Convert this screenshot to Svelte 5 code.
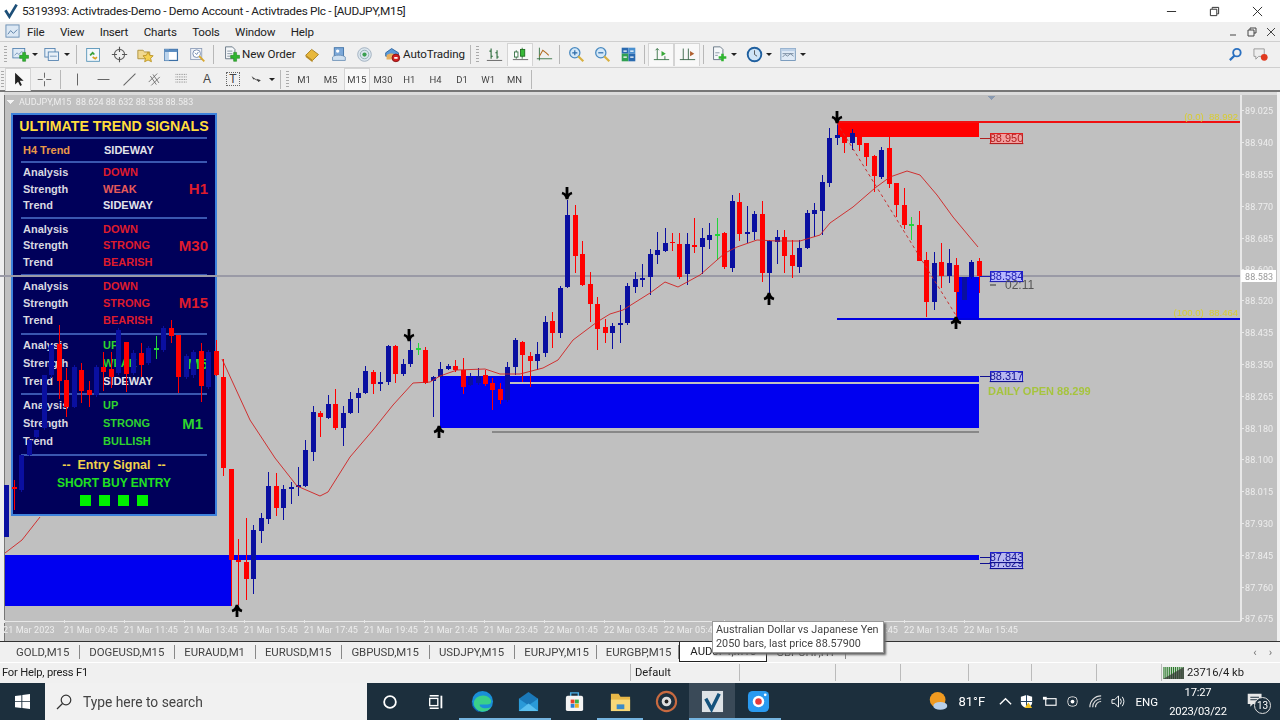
<script>
  const raw = [
    ['b',485,485,537,537],['r',480,487,489,510],['b',455,455,490,492],['b',440,440,455,456],['b',430,430,437,438],['b',375,375,428,430],['b',345,345,375,378],['r',325,344,381,399],['r',368,380,407,417],['b',365,367,407,408],['r',363,370,391,403],['r',381,390,395,407],['b',365,367,395,397],['r',352,367,372,391],['r',352,369,377,388],['b',328,330,373,375],['r',342,342,374,392],['b',350,353,373,375],['r',343,353,365,377],['b',346,348,363,365],['g',336,348,350,359],['b',326,328,350,352],['r',320,328,336,343],['r',335,335,377,393],['b',354,356,377,379],['b',350,352,375,378],['r',343,351,386,402],['b',350,352,387,389],['r',340,351,375,376],
    ['r',359,377,468,476],['r',469,469,560,606],['r',539,560,562,605],['r',518,562,579,600],['b',525,530,579,594],['b',513,518,531,543],['b',472,486,519,524],['r',473,486,508,516],['b',485,489,508,520],['b',482,487,489,504],['b',467,485,487,496],['b',440,450,486,487],['b',406,412,452,461],['r',411,413,417,437],['b',395,404,418,419],['r',389,404,428,430],['b',406,413,428,446],['b',392,399,413,414],['b',388,393,398,413],['b',366,371,393,394],['r',370,372,384,394],['b',372,382,384,391],['b',345,346,382,385],['r',345,346,374,383],
    ['b',359,364,374,376],['b',338,350,364,367],['g',343,348,350,355],['r',347,350,383,384],['b',376,377,381,417],['b',362,369,377,378],['b',364,366,369,370],['r',360,366,370,372],['r',358,370,387,394],['b',373,377,385,386],['b',368,376,383,385],['r',370,375,384,386],['r',378,383,390,410],['r',383,389,400,404],['b',362,367,400,402],['b',338,340,367,375],['r',341,342,355,382],['r',352,356,361,387],['b',342,354,361,370],['b',316,322,353,357],['r',312,321,333,348],['b',286,288,333,338],['b',200,215,287,288],['r',205,215,256,273],['r',241,254,285,286],['r',272,284,304,322],['r',297,304,329,350],['r',319,327,333,343],['b',323,326,333,349],['b',305,323,325,343],['b',283,286,323,325],['b',272,279,287,293],['b',264,278,280,287],['b',249,254,277,295],['b',232,250,255,264],['b',228,243,251,252],['r',233,242,243,251],['r',233,244,277,279],['b',233,244,274,285],['r',218,245,247,253],['b',228,238,247,274],['b',223,235,240,249],['g',218,234,236,260],['r',232,233,267,269],['b',195,201,268,272],['r',193,202,234,241],['b',206,232,234,243],['b',211,214,232,240],['r',201,214,273,282],['b',240,241,273,295],['b',230,237,242,264],['r',230,237,256,273],['r',240,255,266,278],['b',240,248,267,273],['b',210,213,248,249],['b',203,210,214,237],
    ['b',175,182,211,235],['b',128,138,183,187],['b',123,135,138,145],['r',123,130,143,153],['b',129,133,143,150],['r',130,133,145,151],['r',143,143,157,166],['r',155,156,176,192],['b',147,150,177,179],['r',137,148,184,188],['r',183,183,205,217],['r',188,205,225,229],['g',217,224,226,240],['r',211,225,261,261],['r',252,260,302,317],['b',252,263,302,310],['r',243,262,276,288],['b',249,263,276,283],['r',258,265,292,318],['b',277,277,300,300],['b',260,262,277,279],['r',258,261,276,293]
  ];
  const candles = raw.map((r, i) => ({ x: Math.round(402.7 + 7.48 * (i - 53)), color: r[0], hi: r[1], top: r[2], bot: r[3], lo: r[4] }));
  const colors = { r: '#f00', b: '#0a0fa0', g: '#22d43a' };
  const ma1 = '5,553 22,540 40,517';
  const ma2 = '222,359 250,420 275,458 297,486 320,496 328,492 350,457 373,430 393,405 413,383 430,382 440,376 457,370 485,369 500,374 520,374 543,368 558,360 573,340 597,322 610,314 623,310 650,293 665,282 678,287 700,275 725,253 737,247 757,240 777,241 800,241 820,235 830,223 853,207 875,188 890,177 907,171 920,175 937,195 953,217 978,247';
  const axisY = [['89.025',110],['88.940',142],['88.855',174],['88.770',206],['88.685',238],['88.600',269],['88.520',300],['88.435',332],['88.350',364],['88.265',396],['88.180',428],['88.100',459],['88.015',491],['87.930',523],['87.845',555],['87.760',587],['87.675',618]];
  const axisX = ['21 Mar 2023','21 Mar 09:45','21 Mar 11:45','21 Mar 13:45','21 Mar 15:45','21 Mar 17:45','21 Mar 19:45','21 Mar 21:45','21 Mar 23:45','22 Mar 01:45','22 Mar 03:45','22 Mar 05:45','22 Mar 07:45','22 Mar 09:45','22 Mar 11:45','22 Mar 13:45','22 Mar 15:45'];
  const downs = [[837,117],[567,193],[409,335]];
  const ups = [[769,299],[956,323],[439,432],[237,611]];
  const boxes = [['88.950',133,'#f4a0a0','#e02020','#b02020',980],['88.584',271,'#b8b8ff','#2020d0','#2020b0',980],['88.317',371,'#b8b8f0','#2020d0','#101090',980],['87.829',558,'#b8b8f0','#2020d0','#101090',980],['87.843',552,'#b8b8f0','#2020d0','#101090',980]];
  const groups = [
    { rows: [['Analysis','DOWN','red'],['Strength','WEAK','salmon'],['Trend','SIDEWAY','white']], tag: 'H1', tone: 'red', cls: 'g1' },
    { rows: [['Analysis','DOWN','red'],['Strength','STRONG','red'],['Trend','BEARISH','red']], tag: 'M30', tone: 'red', cls: 'g2' },
    { rows: [['Analysis','DOWN','red'],['Strength','STRONG','red'],['Trend','BEARISH','red']], tag: 'M15', tone: 'red', cls: 'g3' },
    { rows: [['Analysis','UP','green'],['Strength','WEAK','green'],['Trend','SIDEWAY','white']], tag: 'M5', tone: 'green', cls: 'g4' },
    { rows: [['Analysis','UP','green'],['Strength','STRONG','green'],['Trend','BULLISH','green']], tag: 'M1', tone: 'green', cls: 'g5' }
  ];
  const menu = ['File','View','Insert','Charts','Tools','Window','Help'];
  const periods = ['M1','M5','M15','M30','H1','H4','D1','W1','MN'];
  const tabs = ['GOLD,M15','DOGEUSD,M15','EURAUD,M1','EURUSD,M15','GBPUSD,M15','USDJPY,M15','EURJPY,M15','EURGBP,M15','AUDJPY,M15','GBPCHF,H1'];
  const plus = '<path d="M9 11h3.5V7.5h3.5V11h3.5v3.5h-3.5V18h-3.5v-3.5H9z" fill="#2fb52f" stroke="#157a15" stroke-width=".6"/>';
  const icons = {
    newchart: '<rect x="1" y="3" width="14" height="11" fill="#dfeaf6" stroke="#4f7fae"/><path d="M3 11l3-3 2 2 4-4" fill="none" stroke="#6b8fb5"/>' + plus,
    profiles: '<rect x="1" y="3" width="12" height="10" fill="#e8f0f8" stroke="#4f7fae"/><rect x="5" y="7" width="12" height="10" fill="#e8f0f8" stroke="#4f7fae"/><path d="M7 12h8" stroke="#6b8fb5"/>',
    market: '<rect x="2" y="3" width="15" height="15" fill="#f2f7fb" stroke="#4f8fb5"/><path d="M6 11l3-3 2 2" fill="none" stroke="#3aa03a" stroke-width="2"/><path d="M9 13l3 2 2-2" fill="none" stroke="#d8a020" stroke-width="2"/>',
    cross: '<circle cx="10" cy="10" r="6" fill="none" stroke="#666" stroke-width="1.3"/><path d="M10 1v6M10 13v6M1 10h6M13 10h6" stroke="#555" stroke-width="1.3"/>',
    star: '<path d="M1 5h6l2 2h6v8H1z" fill="#f0d890" stroke="#a88a30"/><path d="M13 7l2 4 4 .5-3 3 1 4-4-2-4 2 1-4-3-3 4-.5z" fill="#f4d050" stroke="#b89020"/>',
    nav: '<rect x="2" y="4" width="15" height="13" fill="#fff" stroke="#3a6ea5" stroke-width="1.4"/><rect x="2" y="4" width="5" height="13" fill="#bcd4ec"/><rect x="2" y="4" width="15" height="3" fill="#5a8cc0"/>',
    term: '<rect x="2" y="3" width="13" height="13" fill="#eef2f8" stroke="#8a9ab5"/><circle cx="9" cy="9" r="4.5" fill="#fff" stroke="#6a7fa5"/><path d="M12 12l6 6" stroke="#d8a830" stroke-width="2.2"/><path d="M7 8l2 2 2-3" fill="none" stroke="#5a78a5"/>',
    order: '<path d="M3 1h8l3 3v11H3z" fill="#f6f8fa" stroke="#5a6a7a"/><path d="M5 6h6M5 9h6M5 12h4" stroke="#7a8a9a"/>' + plus,
    oil: '<path d="M2 11l7-7 8 6-7 7z" fill="#e8b83c" stroke="#a07818"/><path d="M2 11l8 6v2l-8-6z" fill="#b88a20"/>',
    people: '<rect x="5" y="2" width="11" height="10" fill="#7ca8d8" stroke="#3a6ea5"/><circle cx="9" cy="6" r="2" fill="#fff"/><path d="M3 13c2-3 12-3 15 0v4H3z" fill="#cfe0f0" stroke="#6a8fb5"/>',
    signal: '<circle cx="10" cy="10" r="8" fill="#dce6ee" stroke="#9ab"/><circle cx="10" cy="10" r="5" fill="none" stroke="#8aa"/><circle cx="10" cy="10" r="2.5" fill="#3aa050"/>',
    auto: '<path d="M2 8l7-5 8 5v4H2z" fill="#5a9ad8" stroke="#2a6098"/><path d="M3 11c3-3 8-3 12 0v5H3z" fill="#e8b060"/><circle cx="14" cy="14" r="4.5" fill="#d02020" stroke="#801010"/><rect x="12" y="13" width="4" height="2" fill="#fff"/>',
    bar: '<path d="M6 3v12M4 6h2M6 12h2M13 5v10M11 8h2M13 13h2" stroke="#2a6a3a" stroke-width="1.3"/><path d="M1 17h18" stroke="#555"/>',
    candle: '<path d="M5 5v10M12 2v13" stroke="#2a6a3a"/><rect x="3" y="7" width="4" height="6" fill="#fff" stroke="#2a6a3a"/><rect x="10" y="4" width="5" height="8" fill="#38b838" stroke="#1a6a1a"/><path d="M1 16h18" stroke="#555"/>',
    line: '<path d="M4 2v15M1 15h18" stroke="#2a6a3a"/><path d="M4 12l4-7 4 3 3 3" fill="none" stroke="#b06a20" stroke-width="1.2"/>',
    zin: '<circle cx="8" cy="8" r="6" fill="#d4e8f8" stroke="#4a8ac0" stroke-width="1.5"/><path d="M5 8h6M8 5v6" stroke="#2a6aa8" stroke-width="1.4"/><path d="M12 12l6 6" stroke="#d8b040" stroke-width="2.6"/>',
    zout: '<circle cx="8" cy="8" r="6" fill="#d4e8f8" stroke="#4a8ac0" stroke-width="1.5"/><path d="M5 8h6" stroke="#2a6aa8" stroke-width="1.4"/><path d="M12 12l6 6" stroke="#d8b040" stroke-width="2.6"/>',
    grid: '<rect x="2" y="2" width="8" height="7" fill="#2a6ab0"/><rect x="10" y="2" width="8" height="7" fill="#4a90d0"/><rect x="2" y="9" width="8" height="9" fill="#30a050"/><rect x="10" y="9" width="8" height="9" fill="#2a6ab0"/><path d="M4 6h4M12 6h4M4 13h4M12 13h4" stroke="#fff" stroke-width="1.5"/>',
    scroll: '<path d="M5 3v13M3 5l2-2 2 2M1 16h18M14 12v4" stroke="#2a6a3a" fill="none"/><path d="M10 6l5 3-5 3z" fill="#38a838"/>',
    shift: '<path d="M5 3v13M11 3v13M1 16h18" stroke="#2a5a3a"/><path d="M13 6l5 3-5 3z" fill="#b06030"/>',
    addind: '<path d="M3 1h8l3 3v12H3z" fill="#f6f8fa" stroke="#5a6a7a"/><path d="M5 8h5M5 11h3" stroke="#7a8a9a"/><path d="M9 12h3V9h3v3h3v3h-3v3h-3v-3H9z" fill="#2fb52f"/>',
    clock: '<circle cx="10" cy="10" r="8" fill="#cfe4f6" stroke="#1f5f9f" stroke-width="2.2"/><path d="M10 5v5l3 2" fill="none" stroke="#444"/>',
    tpl: '<rect x="1" y="3" width="17" height="14" fill="#dfeaf6" stroke="#6a8fb5"/><rect x="1" y="3" width="17" height="3" fill="#bcd0e6"/><path d="M3 13l3-3 3 2 3-3 4 3M3 9h13" fill="none" stroke="#6a7f95"/>',
    arrow: '<path d="M6 2v14l3.5-3.5 2.5 5 2-1-2.5-5H16z" fill="#222"/>',
    tcross: '<path d="M10 2v6M10 12v6M2 10h6M12 10h6" stroke="#555"/>',
    vline: '<path d="M10 3v14" stroke="#666" stroke-width="1.2"/>',
    hline: '<path d="M3 10h14" stroke="#666" stroke-width="1.2"/>',
    trend: '<path d="M3 17L17 3" stroke="#666" stroke-width="1.2"/>',
    channel: '<path d="M2 13L12 3M5 17L15 7M4 6l7 10M7 4l7 10" stroke="#666"/>',
    fib: '<path d="M3 4h14M3 7h14M3 10h14M3 13h14" stroke="#777" stroke-dasharray="1 1"/>',
    tools: '<path d="M3 6l4 3-2 1zM9 9l5 2-3 2z" fill="#444"/><path d="M6 9l6 3" stroke="#444"/>'
  };
  const tb1 = [
    { i: 'newchart', caret: 1, w: 'w1' }, { i: 'profiles', caret: 1, w: 'w2' }, { sep: 1 },
    { i: 'market' }, { i: 'cross' }, { i: 'star' }, { i: 'nav' }, { i: 'term' }, { sep: 1 },
    { i: 'order', label: 'New Order', w: 'lbl1' }, { i: 'oil' }, { i: 'people' }, { i: 'signal' },
    { i: 'auto', label: 'AutoTrading', w: 'lbl2' }, { sep: 1 }, { grip: 1 },
    { i: 'bar' }, { i: 'candle', on: 1 }, { i: 'line', w: 'narrow' }, { sep: 1 },
    { i: 'zin' }, { i: 'zout' }, { i: 'grid' }, { sep: 1 },
    { i: 'scroll', on: 1 }, { i: 'shift', on: 1 }, { sep: 1 },
    { i: 'addind', caret: 1, w: 'w5' }, { i: 'clock', caret: 1, w: 'w6' }, { i: 'tpl', caret: 1, w: 'w3' }
  ];
  const tb2 = [
    { i: 'arrow', on: 1 }, { i: 'tcross' }, { sep: 1 }, { i: 'vline' }, { i: 'hline' }, { i: 'trend' }, { i: 'channel' }, { i: 'fib' }
  ];
</script>

{#snippet tbtn(b)}
  {#if b.sep}<span class="sep"></span>
  {:else if b.grip}<span class="grip"></span>
  {:else}
    <span class="btn {b.w ?? ''}" class:on={b.on}>
      <svg class="ic" viewBox="0 0 20 20">{@html icons[b.i]}</svg>
      {#if b.label}<span class="btxt">{b.label}</span>{/if}
      {#if b.caret}<span class="caret"></span>{/if}
    </span>
  {/if}
{/snippet}

<div class="app">
  <header class="title">
    <svg class="logo" viewBox="0 0 20 20"><path d="M3 9l5 8L17 2" fill="none" stroke="#1d4f78" stroke-width="3.4"/></svg>
    <span class="ttl">5319393: Activtrades-Demo - Demo Account - Activtrades Plc - [AUDJPY,M15]</span>
    <span class="winbtns">
      <svg viewBox="0 0 12 12"><path d="M1 6h10" stroke="#222"/></svg>
      <svg viewBox="0 0 12 12"><path d="M3.5 3V1.5h7v7H9M1.5 3.5h7v7h-7z" fill="none" stroke="#222"/></svg>
      <svg viewBox="0 0 12 12"><path d="M1 1l10 10M11 1L1 11" stroke="#222"/></svg>
    </span>
  </header>

  <nav class="menu">
    <svg class="mico" viewBox="0 0 16 16"><rect x="1" y="1" width="14" height="13" fill="#dce8f4" stroke="#6a8fb5"/><path d="M3 11l3-4 3 3 4-4" fill="none" stroke="#5a7fa5"/></svg>
    {#each menu as m}<span class="mi">{m}</span>{/each}
    <span class="mdi">
      <svg viewBox="0 0 10 10"><path d="M2 8h6" stroke="#444"/></svg>
      <svg viewBox="0 0 10 10"><path d="M3 3V1h6v5H7M1 3h6v6H1z" fill="none" stroke="#444"/></svg>
      <svg viewBox="0 0 10 10"><path d="M1 1l8 8M9 1L1 9" stroke="#444"/></svg>
    </span>
  </nav>

  <div class="bar b1">
    <span class="grip"></span>
    {#each tb1 as b}{@render tbtn(b)}{/each}
    <span class="helpers">
      <svg viewBox="0 0 16 16"><circle cx="9.5" cy="6" r="4" fill="none" stroke="#2a70c0" stroke-width="2"/><path d="M7 9l-5 5" stroke="#2a70c0" stroke-width="2.4"/></svg>
      <svg viewBox="0 0 16 16"><path d="M1 2h11v8H6l-3 3v-3H1z" fill="#eee" stroke="#999"/><circle cx="12" cy="11" r="3.6" fill="#e03a20"/></svg>
    </span>
  </div>

  <div class="bar b2">
    <span class="grip"></span>
    {#each tb2 as b}{@render tbtn(b)}{/each}
    <span class="btn"><span class="letter a">A</span></span>
    <span class="btn"><span class="letter t">T</span></span>
    <span class="btn w4"><svg class="ic" viewBox="0 0 20 20">{@html icons.tools}</svg><span class="caret"></span></span>
    <span class="sep"></span>
    <span class="grip"></span>
    {#each periods as p}<span class="per" class:on={p === 'M15'}>{p}</span>{/each}
    <span class="sep"></span>
  </div>

  <main class="chart">
    <div class="panel">
      <div class="ptitle">ULTIMATE TREND SIGNALS</div>
      <hr />
      <div class="h4"><span class="lab h4l">H4 Trend</span><span class="white">SIDEWAY</span></div>
      <hr />
      {#each groups as g}
        <div class="group {g.cls}">
          <div class="rows">
            {#each g.rows as r}
              <div class="row"><span class="lab">{r[0]}</span><span class={r[2]}>{r[1]}</span></div>
            {/each}
          </div>
          <span class="tag {g.tone}">{g.tag}</span>
        </div>
        <hr />
      {/each}
      <div class="entry">--&nbsp; Entry Signal &nbsp;--</div>
      <div class="short">SHORT BUY ENTRY</div>
      <div class="squares"><i></i><i></i><i></i><i></i></div>
    </div>

    <svg class="plot" viewBox="0 92 1280 549" shape-rendering="crispEdges">
      <rect x="4" y="92" width="1273" height="3" fill="#dcdcdc"/>
      <rect x="837" y="121" width="142" height="16" fill="#f00"/>
      <rect x="957" y="277" width="22" height="41" fill="#0000f0"/>
      <rect x="440" y="376" width="539" height="52" fill="#0000f0"/>
      <rect x="510" y="382" width="469" height="2" fill="#c0c0c0"/>
      <rect x="492" y="431" width="487" height="2" fill="#888"/>
      <rect x="5" y="555" width="227" height="51" fill="#0000f0"/>
      <rect x="232" y="555" width="747" height="5" fill="#0000f0"/>
      <rect x="0" y="275" width="1240" height="1.5" fill="#9a9aa6"/>
      <rect x="837" y="121" width="403" height="2" fill="#f01010"/>
      <rect x="837" y="318" width="403" height="2" fill="#0000e0"/>
      {#each candles as k}
        <rect x={k.x} y={k.hi} width="1" height={k.lo - k.hi} fill={colors[k.color]}/>
        <rect x={k.x - 2} y={k.top} width="5" height={Math.max(k.bot - k.top, 1)} fill={colors[k.color]}/>
      {/each}
      <g shape-rendering="auto" fill="none">
        <polyline points={ma1} stroke="#d02020" stroke-width="0.9"/>
        <polyline points={ma2} stroke="#d02020" stroke-width="0.9"/>
        <path d="M837 123L957 317" stroke="#c83030" stroke-dasharray="3 3"/>
        {#each downs as [x, y]}
          <path d="M{x} {y - 6}V{y + 6}M{x - 5} {y}Q{x - 1} {y + 1} {x} {y + 6}Q{x + 1} {y + 1} {x + 5} {y}" stroke="#000" stroke-width="2.8"/>
        {/each}
        {#each ups as [x, y]}
          <path d="M{x} {y + 6}V{y - 6}M{x - 5} {y}Q{x - 1} {y - 1} {x} {y - 6}Q{x + 1} {y - 1} {x + 5} {y}" stroke="#000" stroke-width="2.8"/>
        {/each}
      </g>
      {#each boxes as [v, y, fill, st, tc, from]}
        <path d="M{from} {y + 5.5}H990" stroke={tc}/>
        <rect x="990.5" y={y + 0.5} width="32" height="10" fill={fill} stroke={st}/>
        <text class="boxv" x="1006.5" y={y + 9} fill={tc}>{v}</text>
      {/each}
      <g shape-rendering="auto">
        <text class="fibo" x="1238" y="120">(0.0)&nbsp; 88.992</text>
        <text class="fibo" x="1238" y="316">(100.0)&nbsp; 88.464</text>
        <text class="daily" x="988" y="395">DAILY OPEN 88.299</text>
        <text class="clock" x="1005" y="289">02:11</text>
        <path d="M990 285h6" stroke="#333"/>
      </g>
      <rect x="1240" y="95" width="1.5" height="526" fill="#e8e8e8"/>
      <rect x="5" y="620.5" width="1236" height="1.5" fill="#e8e8e8"/>
      {#each axisY as [v, y]}
        <rect x="1241" y={y} width="3" height="1" fill="#e8e8e8"/>
        <text class="ax" x="1245" y={y + 3.5}>{v}</text>
      {/each}
      <rect x="1241" y="270" width="35" height="12" fill="#fff"/>
      <text class="ax bid" x="1245" y="280">88.583</text>
      {#each axisX as v, i}
        <rect x={4 + i * 60} y="620" width="1" height="3" fill="#e8e8e8"/>
        <text class="ax" x={i === 0 ? 3 : 4 + i * 60} y="633">{v}</text>
      {/each}
      <path d="M987 96h8l-4 4z" fill="#8a9ab0"/>
      <path d="M7 100h7l-3.5 4z" fill="#f4f4f4"/>
      <text class="info" x="19" y="105">AUDJPY,M15&nbsp; 88.624 88.632 88.538 88.583</text>
    </svg>

    <div class="tip">
      <div>Australian Dollar vs Japanese Yen</div>
      <div>2050 bars, last price 88.57900</div>
    </div>
  </main>

  <div class="tabs">
    {#each tabs as t}<span class="tab" class:active={t.startsWith('AUDJPY')}>{t}</span>{/each}
    <span class="tabnav"><i>‹</i><i>›</i></span>
  </div>

  <footer class="status">
    <span class="s0">For Help, press F1</span>
    <span class="scell s1">Default</span>
    <span class="scell s2"></span><span class="scell s3"></span><span class="scell s4"></span><span class="scell s5"></span><span class="scell s6"></span><span class="scell s8"></span>
    <span class="scell s7">
      <svg viewBox="0 0 22 12" preserveAspectRatio="none"><path d="M1 0v12M3 0v12M5 0v12M7 0v12M9 0v12M11 0v12M13 0v12M15 0v12M17 0v12M19 0v12M21 0v12" stroke="#2a7a2a" stroke-width="1.2"/><path d="M0 12L22 0V12z" fill="#333" opacity=".7"/></svg>
      23716/4 kb
    </span>
  </footer>

  <div class="task">
    <span class="start"><svg viewBox="0 0 16 16"><path d="M0 2.2L6.8 1.2V7.6H0zM7.8 1L16 0V7.6H7.8zM0 8.6H6.8V15L0 14zM7.8 8.6H16V16L7.8 15z" fill="#fff"/></svg></span>
    <span class="search">
      <svg viewBox="0 0 16 16"><circle cx="10" cy="6" r="4.8" fill="none" stroke="#333" stroke-width="1.2"/><path d="M6.5 9.5L1 15" stroke="#333" stroke-width="1.2"/></svg>
      Type here to search
    </span>
    <span class="tk small"><svg viewBox="0 0 20 20"><circle cx="10" cy="10" r="6.5" fill="none" stroke="#fff" stroke-width="2"/></svg></span>
    <span class="tk small"><svg viewBox="0 0 20 20"><path d="M3 3h10M3 17h10" stroke="#fff" stroke-width="1.6"/><rect x="3" y="6" width="9" height="8" fill="none" stroke="#fff" stroke-width="1.5"/><rect x="15" y="3" width="2" height="14" fill="#fff"/></svg></span>
    <span class="tk run"><svg viewBox="0 0 24 24"><circle cx="12" cy="12" r="11" fill="#1a8fd8"/><path d="M3 14C3 6 15 3 20 9c2 3 1 6-3 6H9c0 4 6 5 12 3-3 5-11 6-15 2-2-2-3-4-3-6z" fill="#3ad08a"/><path d="M8 23C3 21 0 16 1 12c1 5 4 9 9 11z" fill="#0f5ea8"/></svg></span>
    <span class="tk run"><svg viewBox="0 0 24 24"><rect x="2" y="9" width="20" height="13" fill="#2a9ad8"/><path d="M2 9l10-7 10 7-10 7z" fill="#1a78b8"/><path d="M2 22l10-8 10 8z" fill="#5ac0f0"/></svg></span>
    <span class="tk"><svg viewBox="0 0 24 24"><path d="M8 7V3h8v4" fill="none" stroke="#4ab0e8" stroke-width="1.5"/><rect x="3" y="6" width="18" height="16" rx="2" fill="#f4f4f4"/><rect x="8" y="10" width="4" height="4" fill="#e8402a"/><rect x="12.5" y="10" width="4" height="4" fill="#3ab04a"/><rect x="8" y="14.5" width="4" height="4" fill="#2a80d8"/><rect x="12.5" y="14.5" width="4" height="4" fill="#f0b020"/></svg></span>
    <span class="tk run"><svg viewBox="0 0 24 24"><path d="M2 4h8l2 3h10v15H2z" fill="#e8b848"/><rect x="2" y="10" width="20" height="12" fill="#f8d878"/><rect x="8" y="15" width="8" height="5" fill="#3a8ac8"/></svg></span>
    <span class="tk"><svg viewBox="0 0 24 24"><circle cx="12" cy="12" r="10" fill="none" stroke="#c86a40" stroke-width="2.2"/><circle cx="12" cy="12" r="5" fill="#ddd"/><circle cx="12" cy="12" r="2" fill="#222"/></svg></span>
    <span class="tk cur"><svg viewBox="0 0 24 24"><rect x="1" y="1" width="22" height="22" fill="#dde2e6"/><path d="M5 9l6 11L19 4" fill="none" stroke="#14527c" stroke-width="3.6"/></svg></span>
    <span class="tk run"><svg viewBox="0 0 24 24"><rect x="1" y="1" width="22" height="22" rx="5" fill="#2a9af0"/><circle cx="12" cy="12" r="6" fill="#fff"/><circle cx="12" cy="12" r="3.4" fill="#e83a3a"/><circle cx="19" cy="5" r="1.4" fill="#fff"/></svg></span>

    <span class="tray">
      <svg class="sun" viewBox="0 0 24 24"><circle cx="11" cy="10" r="9" fill="#f09a20"/><ellipse cx="14" cy="17" rx="8" ry="4.5" fill="#b8cfe8"/></svg>
      <span class="tmp">81°F</span>
      <svg class="tic chev" viewBox="0 0 16 16"><path d="M2 11l6-6 6 6" fill="none" stroke="#fff" stroke-width="1.4"/></svg>
      <svg class="tic" viewBox="0 0 16 16"><path d="M8 1l6 2v6c0 3-3 5-6 6-3-1-6-3-6-6V3z" fill="#fff"/><path d="M2 8h12M8 1v14" stroke="#1a3a5a"/><path d="M10 9l4 6H6z" fill="#f0c020"/></svg>
      <svg class="tic" viewBox="0 0 16 16"><rect x="4" y="5" width="11" height="7" fill="none" stroke="#fff" stroke-width="1.2"/><path d="M1 3h4v3H1z" fill="#fff"/></svg>
      <svg class="tic" viewBox="0 0 16 16"><rect x="3" y="3" width="10" height="10" rx="4" fill="none" stroke="#ddd"/><circle cx="8" cy="8" r="2" fill="#fff"/></svg>
      <svg class="tic" viewBox="0 0 16 16"><path d="M2 14A12 12 0 0 1 14 2M5 14A9 9 0 0 1 14 5M8 14A6 6 0 0 1 14 8" fill="none" stroke="#ddd" stroke-width="1.2"/></svg>
      <svg class="tic" viewBox="0 0 16 16"><path d="M1 6h3l4-4v12l-4-4H1z" fill="none" stroke="#fff"/><path d="M10 5q2 3 0 6M12 3q3.5 5 0 10" fill="none" stroke="#fff"/></svg>
      <span class="eng">ENG</span>
      <span class="time"><span>17:27</span><span>2023/03/22</span></span>
      <span class="note"><svg viewBox="0 0 22 22"><path d="M2 2h16v12H8l-3 3v-3H2z" fill="#e8e8e8"/><path d="M5 6h10M5 9h10" stroke="#1c2f3d" stroke-width="1.2"/></svg><b>13</b></span>
    </span>
  </div>
</div>

<style>
  :global(body) { margin: 0; overflow: hidden; background: #f0f0f0; }
  .app { width: 1280px; height: 720px; display: flex; flex-direction: column; overflow: hidden; font-family: Roboto, "Liberation Sans", sans-serif; font-size: 12px; color: #222; filter: blur(0.35px); }
  .title { height: 22px; background: #fff; display: flex; align-items: center; padding-left: 3px; flex: none; }
  .logo { width: 16px; height: 16px; margin-right: 3px; }
  .ttl { font-size: 11.8px; letter-spacing: -0.29px; color: #222; white-space: nowrap; }
  .winbtns { margin-left: auto; display: flex; gap: 32px; padding-right: 17px; }
  .winbtns svg { width: 11px; height: 11px; }
  .menu { height: 19px; background: #f0f0f0; display: flex; align-items: center; padding-left: 5px; flex: none; }
  .mico { width: 15px; height: 15px; margin-right: 7px; }
  .mi { margin-right: 15.5px; font-size: 11.6px; letter-spacing: -0.2px; }
  .mdi { margin-left: auto; display: flex; gap: 9px; padding-right: 4px; }
  .mdi svg { width: 10px; height: 10px; }
  .bar { background: #f0f0f0; display: flex; align-items: center; flex: none; box-shadow: inset 0 1px 0 #cfcfcf; }
  .b1 { height: 26px; padding-left: 2px; }
  .b2 { height: 25px; border-bottom: 2px solid #777; box-sizing: border-box; padding-top: 1px; }
  .b2 > .grip:first-child { margin: 0 1px; }
  .grip { width: 3px; height: 17px; margin: 0 2px; flex: none; background: repeating-linear-gradient(#aaa 0 1px, transparent 1px 3px); }
  .sep { width: 1px; height: 19px; background: #b8b8b8; margin: 0 3px; flex: none; }
  .btn { width: 26px; height: 23px; display: flex; align-items: center; justify-content: center; flex: none; box-sizing: border-box; }
  .btn.on { background: #f8f8f8; border: 1px solid #d4d4d4; border-bottom: 0; }
  .ic { width: 17px; height: 17px; flex: none; }
  .btxt { font-size: 11.6px; letter-spacing: -0.1px; margin-left: 2px; white-space: nowrap; }
  .w1 { width: 31px; } .w2 { width: 33px; } .w3 { width: 33px; } .w4 { width: 31px; } .w5 { width: 34px; } .w6 { width: 35px; }
  .narrow { width: 23px; }
  .lbl1 { width: 82px; justify-content: flex-start; padding-left: 6px; }
  .lbl2 { width: 90px; justify-content: flex-start; padding-left: 7px; }
  .caret { border: 3px solid transparent; border-top: 3px solid #222; margin: 3px 0 0 3px; flex: none; }
  .helpers { margin-left: auto; display: flex; gap: 10px; padding-right: 12px; }
  .helpers svg { width: 15px; height: 15px; }
  .letter { font-family: "Liberation Sans", sans-serif; font-size: 12px; color: #444; }
  .letter.t { border: 1px dotted #666; padding: 0 2px; line-height: 12px; }
  .per { width: 26.3px; height: 22px; display: flex; align-items: center; justify-content: center; font-size: 9.5px; color: #444; box-sizing: border-box; flex: none; }
  .per.on { background: #f8f8f8; border: 1px solid #d4d4d4; border-bottom: 0; }
  .chart { position: relative; height: 549px; flex: none; background: #c0c0c0; border-left: 4px solid #eee; border-right: 3px solid #f0f0f0; box-sizing: border-box; box-shadow: inset 1px 0 0 #777; }
  .plot { position: absolute; left: -4px; top: 0; width: 1280px; height: 549px; }
  .boxv { font: 11px "Liberation Sans", sans-serif; text-anchor: middle; text-decoration: underline; }
  .fibo { font: 9.5px "Liberation Sans", sans-serif; fill: #d8cc30; text-anchor: end; }
  .daily { font: bold 11px "Liberation Sans", sans-serif; fill: #a6c43e; }
  .clock { font: 12px "Liberation Sans", sans-serif; fill: #555; }
  .ax { font: 9px Roboto, sans-serif; fill: #eee; letter-spacing: .1px; }
  .bid { fill: #999; }
  .info { font: 9px Roboto, sans-serif; fill: #eee; }
  .panel { position: absolute; left: 7px; top: 21px; width: 206px; height: 403px; box-sizing: border-box; border: 2px solid #3e82dc; background: #00005a; font: bold 11px "Liberation Sans", sans-serif; color: #d8d8e0; }
  .panel hr { margin: 0 8px; border: 0; height: 2px; background: #3a56b0; }
  .ptitle { height: 22px; display: flex; align-items: center; justify-content: center; color: #ffdc3c; font-size: 14.2px; white-space: nowrap; }
  .h4 { height: 22px; display: grid; grid-template-columns: 81px 1fr; align-items: center; padding-left: 10px; }
  .h4l { color: #e89848; }
  .group { position: relative; display: flex; align-items: center; padding-left: 10px; box-sizing: border-box; }
  .rows { flex: 1; }
  .row { display: grid; grid-template-columns: 80px 1fr; align-items: center; }
  .g1 { height: 54px; padding-bottom: 3px; } .g2 { height: 55px; padding-bottom: 3px; } .g3 { height: 57px; padding-bottom: 4px; } .g4 { height: 58px; padding-bottom: 2px; } .g5 { height: 59px; padding-bottom: 3px; }
  .g1 .row, .g2 .row { height: 16.5px; }
  .g3 .row { height: 17px; }
  .g4 .row, .g5 .row { height: 18px; }
  .tag { font-size: 15px; margin-right: 7px; }
  .g5 .tag { margin-right: 12px; }
  .white { color: #e4e4ea; } .red { color: #de1c2c; } .salmon { color: #e65a58; } .green { color: #2ed42e; }
  .entry { text-align: center; color: #f2d24a; font-size: 12.5px; line-height: 18px; }
  .short { text-align: center; color: #20e020; font-size: 12px; line-height: 18px; }
  .squares { display: flex; justify-content: center; gap: 8px; margin-top: 3px; }
  .squares i { width: 11px; height: 11px; background: #00f000; }
  .tip { position: absolute; left: 708px; top: 529px; width: 172px; height: 32px; background: #fff; border: 1px solid #999; box-shadow: 2px 2px 2px #666; font-size: 10.8px; line-height: 13.5px; color: #444; padding: 1px 3px; box-sizing: border-box; white-space: nowrap; z-index: 2; }
  .tabs { height: 21px; flex: none; display: flex; align-items: center; background: #f0f0f0; border-top: 1px solid #333; box-sizing: border-box; padding-left: 7px; font-size: 11.4px; letter-spacing: -0.05px; color: #444; }
  .tab { padding: 0 10px 0 9px; border-right: 1px solid #888; height: 14px; line-height: 14px; white-space: nowrap; }
  .tab:nth-child(7), .tab:nth-child(8) { padding-right: 7px; }
  .tab.active { height: 20px; line-height: 18px; margin-top: -1px; background: #fff; border: 1px solid #222; border-top: 0; box-sizing: border-box; color: #222; padding: 0 10px; }
  .tabnav { margin-left: auto; display: flex; gap: 12px; padding-right: 8px; color: #777; }
  .tabnav i { font-style: normal; }
  .status { height: 21px; flex: none; display: flex; align-items: center; background: #f0f0f0; box-shadow: inset 0 1px 0 #fff; font-size: 11.2px; padding-left: 2px; }
  .s0 { width: 628px; flex: none; letter-spacing: -0.2px; }
  .scell { height: 17px; line-height: 17px; border-left: 1px solid #bbb; padding-left: 4px; box-sizing: border-box; flex: none; display: flex; align-items: center; gap: 3px; }
  .s1 { width: 109px; } .s2 { width: 96px; } .s3 { width: 65px; } .s4 { width: 68px; } .s5 { width: 63px; } .s6 { width: 65px; } .s8 { width: 65px; }
  .s7 { padding-left: 1px; }
  .s7 svg { width: 21px; height: 12px; }
  .task { height: 37px; flex: none; background: #1c2f3d; display: flex; align-items: stretch; color: #fff; }
  .start { width: 45px; display: flex; align-items: center; justify-content: center; flex: none; }
  .start svg { width: 15px; height: 15px; }
  .search { width: 322px; background: #f1f1f1; color: #444; display: flex; align-items: center; gap: 11px; padding-left: 11px; box-sizing: border-box; font-size: 13.8px; flex: none; }
  .search svg { width: 16px; height: 16px; }
  .tk { width: 46px; display: flex; align-items: center; justify-content: center; box-sizing: border-box; flex: none; }
  .tk svg { width: 23px; height: 23px; }
  .tk.small svg { width: 18px; height: 18px; }
  .run { box-shadow: inset 0 -2px 0 #74b4e0; }
  .cur { background: #3a4a58; box-shadow: inset 0 -2px 0 #74b4e0; }
  .tray { margin-left: auto; display: flex; align-items: center; }
  .sun { width: 21px; height: 21px; margin-right: 9px; }
  .tmp { font-size: 13px; width: 28px; margin-right: 7.5px; }
  .tic { width: 15px; height: 15px; margin: 0 4px; }
  .chev { margin-right: 2px; }
  .eng { font-size: 11.5px; margin: 0 10px 0 5.5px; }
  .time { display: flex; flex-direction: column; align-items: center; font-size: 11.2px; letter-spacing: -0.2px; line-height: 19px; width: 60px; margin-right: 18px; }
  .note { position: relative; width: 34px; height: 100%; display: flex; align-items: center; }
  .note svg { width: 19px; height: 19px; }
  .note b { position: absolute; left: 8px; top: 14px; width: 17px; height: 17px; line-height: 15px; box-sizing: border-box; border: 1px solid #ddd; border-radius: 50%; background: #1c2f3d; font-size: 10px; font-weight: 400; text-align: center; }
</style>
